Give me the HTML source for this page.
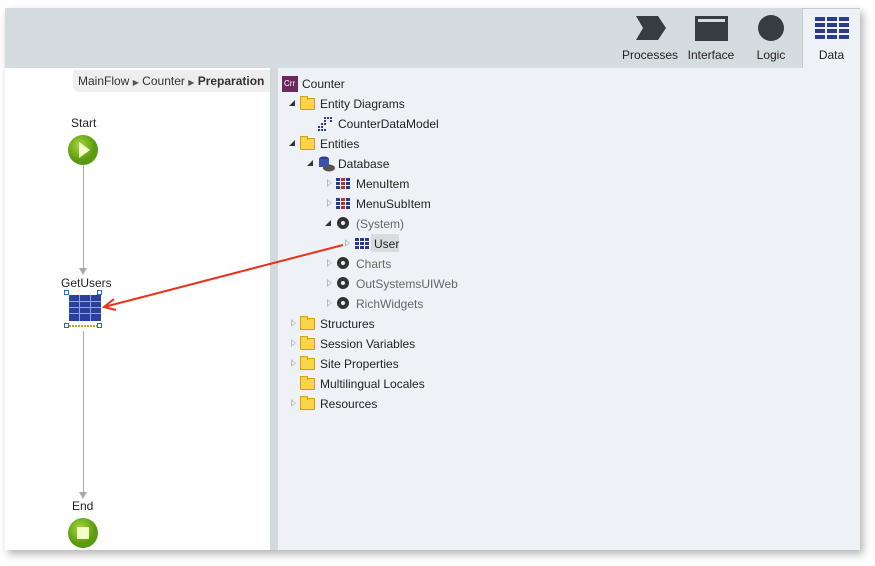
<!DOCTYPE html>
<html><head><meta charset="utf-8"><style>
*{margin:0;padding:0;box-sizing:border-box}
body{width:875px;height:566px;background:#fff;font-family:"Liberation Sans",sans-serif;font-size:12px;color:#222;position:relative;overflow:hidden}
#win{position:absolute;left:5px;top:8px;width:855px;height:542px;box-shadow:3px 4px 8px rgba(0,0,0,.3);background:#eef1f5;overflow:hidden}
#top{position:absolute;left:0;top:0;width:855px;height:60px;background:#d5dcdf}
.tab{position:absolute;top:0;height:60px;text-align:center;font-size:12px;color:#222}
.tab span{position:absolute;top:40px;left:0;right:0}
#left{position:absolute;left:0;top:60px;width:265px;height:482px;background:#fff}
#div{position:absolute;left:265px;top:60px;width:8px;height:482px;background:#d2d9dd}
#bc{position:absolute;left:68px;top:2px;width:197px;height:22px;background:#eeeeee;border-radius:0 0 0 6px;font-size:12px;padding:4px 0 0 5px;color:#333;white-space:nowrap}
.r{position:absolute;font-size:12px;white-space:nowrap;color:#222}
.g{color:#666}
.arr{position:absolute;width:0;height:0}
.ao{border-left:5px solid #bbb;border-top:4px solid transparent;border-bottom:4px solid transparent}
.ao::after{content:"";position:absolute;left:-4px;top:-2px;border-left:3px solid #eef1f5;border-top:2px solid transparent;border-bottom:2px solid transparent}
.ad{border-right:6px solid #333;border-top:6px solid transparent}
.fold{position:absolute;width:15px;height:12px;background:#fbd547;border:1px solid #d79c10;border-radius:1px}
.fold::before{content:"";position:absolute;left:-1px;top:-3px;width:6px;height:3px;background:#fbd547;border:1px solid #d79c10;border-bottom:none}
.mod{position:absolute;width:12px;height:12px;border-radius:50%;background:#333}
.mod::after{content:"";position:absolute;left:4px;top:4px;width:4px;height:4px;border-radius:50%;background:#eef1f5}
</style></head><body>
<div id="win">
 <div id="top">
  <div class="tab" style="left:612px;width:66px">
   <svg style="position:absolute;left:17px;top:7px" width="34" height="26"><path d="M2 1H24L32 13L24 25H2L9 13Z" fill="#363c3f"/></svg>
   <span>Processes</span></div>
  <div class="tab" style="left:678px;width:56px">
   <svg style="position:absolute;left:12px;top:8px" width="33" height="25"><rect x="0" y="0" width="33" height="25" fill="#363c3f"/><rect x="3" y="3" width="27" height="3" fill="#d5dcdf"/></svg>
   <span>Interface</span></div>
  <div class="tab" style="left:740px;width:52px">
   <svg style="position:absolute;left:12px;top:6px" width="28" height="28"><circle cx="14" cy="14" r="13" fill="#363c3f"/></svg>
   <span>Logic</span></div>
  <div class="tab" style="left:797px;width:58px;background:#eef1f5;border-left:1px solid #c5ccd0;border-top:1px solid #c5ccd0">
   <svg style="position:absolute;left:12px;top:8px" width="34" height="24" fill="#2b3a8f">
    <rect x="0" y="0" width="10" height="4"/><rect x="12" y="0" width="10" height="4"/><rect x="24" y="0" width="10" height="4"/>
    <rect x="0" y="6" width="10" height="4"/><rect x="12" y="6" width="10" height="4"/><rect x="24" y="6" width="10" height="4"/>
    <rect x="0" y="12" width="10" height="4"/><rect x="12" y="12" width="10" height="4"/><rect x="24" y="12" width="10" height="4"/>
    <rect x="0" y="18" width="10" height="4"/><rect x="12" y="18" width="10" height="4"/><rect x="24" y="18" width="10" height="4"/></svg>
   <span style="top:39px">Data</span></div>
 </div>
 <div id="left">
  <div id="bc">MainFlow <span style="font-size:8px;color:#555">&#9654;</span> Counter <span style="font-size:8px;color:#555">&#9654;</span> <b>Preparation</b></div>
  <div class="r" style="left:66px;top:48px">Start</div>
  <svg style="position:absolute;left:62px;top:66px" width="32" height="32"><defs><radialGradient id="gg" cx="40%" cy="35%"><stop offset="0" stop-color="#a6d93a"/><stop offset="1" stop-color="#5a9a12"/></radialGradient></defs><circle cx="16" cy="16" r="15" fill="url(#gg)"/><path d="M12 8L23 16L12 24Z" fill="#f4ffc8"/></svg>
  <div style="position:absolute;left:78px;top:97px;width:1px;height:105px;background:#aaa"></div>
  <div style="position:absolute;left:74px;top:200px;border-top:7px solid #aaa;border-left:4px solid transparent;border-right:4px solid transparent"></div>
  <div class="r" style="left:56px;top:208px">GetUsers</div>
  <svg style="position:absolute;left:58px;top:221px" width="42" height="42">
   <rect x="6" y="6" width="32" height="26" fill="#2c3f9e"/>
   <g stroke="#8fa8e8" stroke-width="1"><line x1="6" y1="12.5" x2="38" y2="12.5"/><line x1="6" y1="18.5" x2="38" y2="18.5"/><line x1="6" y1="24.5" x2="38" y2="24.5"/><line x1="16.5" y1="6" x2="16.5" y2="32"/><line x1="27.5" y1="6" x2="27.5" y2="32"/></g>
   <path d="M6 37h32" stroke="#c9a227" stroke-width="2" stroke-dasharray="2 1"/>
   <g fill="#fff" stroke="#1a6fd0"><rect x="1.5" y="1.5" width="4" height="4"/><rect x="34.5" y="1.5" width="4" height="4"/><rect x="1.5" y="34.5" width="4" height="4"/><rect x="34.5" y="34.5" width="4" height="4"/></g></svg>
  <div style="position:absolute;left:78px;top:263px;width:1px;height:165px;background:#aaa"></div>
  <div style="position:absolute;left:74px;top:424px;border-top:7px solid #aaa;border-left:4px solid transparent;border-right:4px solid transparent"></div>
  <div class="r" style="left:67px;top:431px">End</div>
  <svg style="position:absolute;left:62px;top:449px" width="32" height="32"><circle cx="16" cy="16" r="15" fill="url(#gg)"/><rect x="10" y="10" width="12" height="12" fill="#f4ffc8"/></svg>
 </div>
 <div id="div"></div>
 <div style="position:absolute;left:277px;top:68px;width:16px;height:16px;background:#6b2a5e;color:#fff;font-size:8px;padding:3px 0 0 2px">Crr</div>
 <div class="r" style="left:297px;top:69px">Counter</div>

 <div class="arr ad" style="left:284px;top:92px"></div><div class="fold" style="left:295px;top:90px"></div><div class="r" style="left:315px;top:89px">Entity Diagrams</div>
 <svg style="position:absolute;left:313px;top:108px" width="16" height="16" fill="#2b3a8f"><g><rect x="6" y="1" width="2" height="2"/><rect x="9" y="1" width="2" height="2"/><rect x="12" y="1" width="2" height="2"/><rect x="6" y="4" width="2" height="2"/><rect x="12" y="4" width="2" height="2"/><rect x="3" y="7" width="2" height="2"/><rect x="6" y="7" width="2" height="2"/><rect x="0" y="10" width="2" height="2"/><rect x="3" y="10" width="2" height="2"/><rect x="0" y="13" width="2" height="2"/><rect x="3" y="13" width="2" height="2"/><rect x="6" y="13" width="2" height="2"/></g></svg>
 <div class="r" style="left:333px;top:109px">CounterDataModel</div>

 <div class="arr ad" style="left:284px;top:132px"></div><div class="fold" style="left:295px;top:130px"></div><div class="r" style="left:315px;top:129px">Entities</div>
 <div class="arr ad" style="left:302px;top:152px"></div>
 <svg style="position:absolute;left:313px;top:148px" width="18" height="16"><ellipse cx="6" cy="3" rx="5" ry="2.5" fill="#2b3a8f"/><rect x="1" y="3" width="10" height="8" fill="#3a52b0"/><ellipse cx="11" cy="12" rx="6" ry="3.5" fill="#555"/></svg>
 <div class="r" style="left:333px;top:149px">Database</div>

 <svg width="0" height="0" style="position:absolute"><defs><g id="ent"><rect x="0" y="0" width="14" height="11" fill="#2b3a8f"/><g stroke="#fff"><line x1="0" y1="3.5" x2="14" y2="3.5"/><line x1="0" y1="7.5" x2="14" y2="7.5"/><line x1="4.5" y1="0" x2="4.5" y2="11"/><line x1="9.5" y1="0" x2="9.5" y2="11"/></g></g></defs></svg>
 <div class="arr ao" style="left:322px;top:171px"></div>
 <svg style="position:absolute;left:331px;top:170px" width="14" height="11"><use href="#ent"/><rect x="5" y="0" width="4" height="11" fill="#d43030" opacity=".85"/><g stroke="#fff"><line x1="0" y1="3.5" x2="14" y2="3.5"/><line x1="0" y1="7.5" x2="14" y2="7.5"/></g></svg>
 <div class="r" style="left:351px;top:169px">MenuItem</div>
 <div class="arr ao" style="left:322px;top:191px"></div>
 <svg style="position:absolute;left:331px;top:190px" width="14" height="11"><use href="#ent"/><rect x="5" y="0" width="4" height="11" fill="#d43030" opacity=".85"/><g stroke="#fff"><line x1="0" y1="3.5" x2="14" y2="3.5"/><line x1="0" y1="7.5" x2="14" y2="7.5"/></g></svg>
 <div class="r" style="left:351px;top:189px">MenuSubItem</div>
 <div class="arr ad" style="left:320px;top:212px"></div><div class="mod" style="left:332px;top:209px"></div><div class="r g" style="left:351px;top:209px">(System)</div>
 <div class="arr ao" style="left:340px;top:231px"></div>
 <svg style="position:absolute;left:350px;top:230px" width="14" height="11"><use href="#ent"/></svg>
 <div style="position:absolute;left:366px;top:226px;width:28px;height:18px;background:#d9dcdf"></div>
 <div class="r" style="left:369px;top:229px">User</div>
 <div class="arr ao" style="left:322px;top:251px"></div><div class="mod" style="left:332px;top:249px"></div><div class="r g" style="left:351px;top:249px">Charts</div>
 <div class="arr ao" style="left:322px;top:271px"></div><div class="mod" style="left:332px;top:269px"></div><div class="r g" style="left:351px;top:269px">OutSystemsUIWeb</div>
 <div class="arr ao" style="left:322px;top:291px"></div><div class="mod" style="left:332px;top:289px"></div><div class="r g" style="left:351px;top:289px">RichWidgets</div>

 <div class="arr ao" style="left:286px;top:311px"></div><div class="fold" style="left:295px;top:310px"></div><div class="r" style="left:315px;top:309px">Structures</div>
 <div class="arr ao" style="left:286px;top:331px"></div><div class="fold" style="left:295px;top:330px"></div><div class="r" style="left:315px;top:329px">Session Variables</div>
 <div class="arr ao" style="left:286px;top:351px"></div><div class="fold" style="left:295px;top:350px"></div><div class="r" style="left:315px;top:349px">Site Properties</div>
 <div class="fold" style="left:295px;top:370px"></div><div class="r" style="left:315px;top:369px">Multilingual Locales</div>
 <div class="arr ao" style="left:286px;top:391px"></div><div class="fold" style="left:295px;top:390px"></div><div class="r" style="left:315px;top:389px">Resources</div>
</div>
<svg style="position:absolute;left:0;top:0" width="875" height="566"><path d="M343 245L104 307" stroke="#e8321c" stroke-width="2" fill="none"/><path d="M114 299L104 307L116 310" stroke="#e8321c" stroke-width="2" fill="none"/></svg>
</body></html>
